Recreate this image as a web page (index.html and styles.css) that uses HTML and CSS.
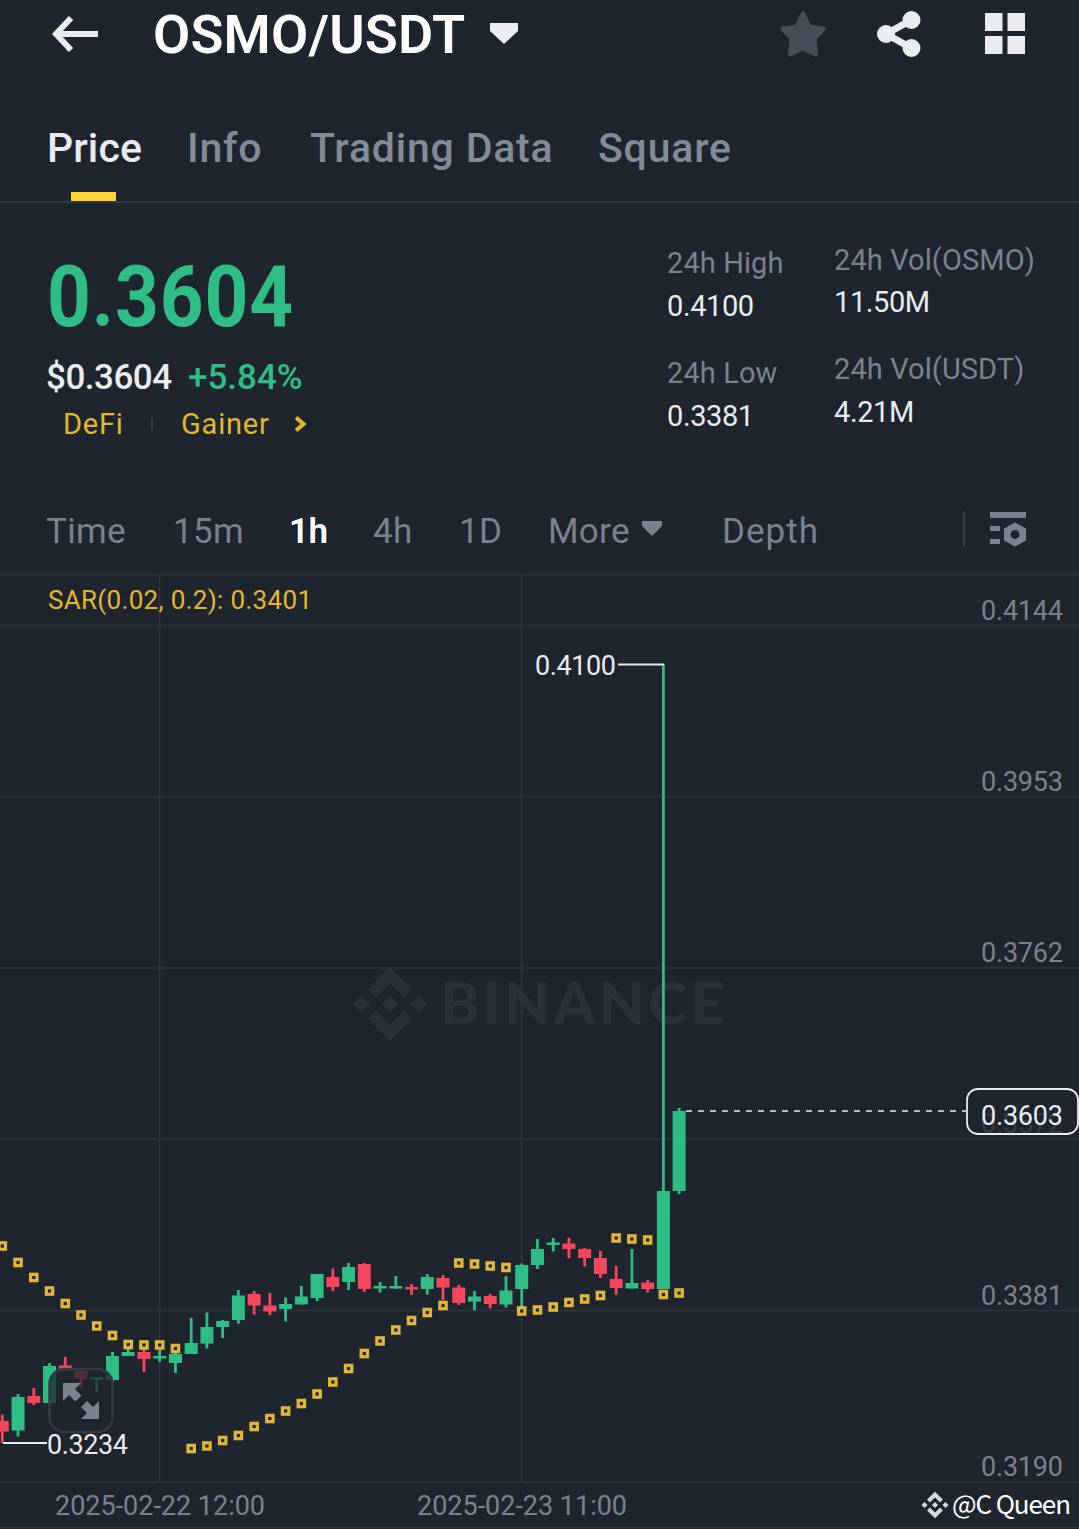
FILE: index.html
```
<!DOCTYPE html>
<html lang="en">
<head>
    <meta charset="UTF-8">
    <meta name="viewport" content="width=device-width, initial-scale=1.0">
    <title>OSMO/USDT</title>
    <link rel="stylesheet" href="styles.css">
</head>
<body>
    <header class="topbar">
        <svg class="back" width="46" height="36" viewBox="0 0 46 36">
            <path d="M19 2 4 18l15 16M4 18h42" fill="none" stroke="#eaecef" stroke-width="6"/>
        </svg>
        <h1 class="pair">OSMO/USDT</h1>
        <svg class="pair-caret" width="28" height="21" viewBox="0 0 28 21">
            <path d="M0 0h28v8L14 21 0 8z" fill="#eaecef"/>
        </svg>
        <div class="actions">
            <svg width="46" height="46" viewBox="0 0 46 46">
                <path d="M23 3l6.200 13.200L43 18 34 27.500 35.500 43 23 36.500 10.500 43l1.500-15.500L3 18l13.800-1.800z" fill="#474d59" stroke="#474d59" stroke-width="5" stroke-linejoin="round"/>
            </svg>
            <svg width="44" height="46" viewBox="0 0 44 46">
                <path d="M34.500 9 9 23l25.500 14" fill="none" stroke="#eaecef" stroke-width="7"/>
                <circle cx="34.500" cy="9" r="9" fill="#eaecef"/>
                <circle cx="9" cy="23" r="9" fill="#eaecef"/>
                <circle cx="34.500" cy="37" r="9" fill="#eaecef"/>
            </svg>
            <svg width="40" height="41" viewBox="0 0 40 41">
                <path d="M0 0h17.500v18H0zM22.500 0H40v18H22.500zM0 23h17.500v18H0zM22.500 23H40v18H22.500z" fill="#eaecef"/>
            </svg>
        </div>
    </header>

    <nav class="tabs">
        <a class="tab active">Price</a>
        <a class="tab">Info</a>
        <a class="tab">Trading Data</a>
        <a class="tab">Square</a>
    </nav>

    <section class="summary">
        <div class="quote">
            <div class="last-price">0.3604</div>
            <div class="change"><span class="usd">$0.3604</span><span class="percent">+5.84%</span></div>
            <div class="tags">
                <span class="tag-defi">DeFi</span>
                <i class="tag-divider"></i>
                <span class="tag-gainer">Gainer</span>
                <svg width="13" height="16" viewBox="0 0 13 16">
                    <path d="M2 1.500 9.500 8 2 14.500" fill="none" stroke="#e5b52b" stroke-width="4"/>
                </svg>
            </div>
        </div>
        <dl class="stats">
            <dt>24h High</dt>
            <dd>0.4100</dd>
            <dt>24h Low</dt>
            <dd>0.3381</dd>
        </dl>
        <dl class="stats volume">
            <dt>24h Vol(OSMO)</dt>
            <dd>11.50M</dd>
            <dt>24h Vol(USDT)</dt>
            <dd>4.21M</dd>
        </dl>
    </section>

    <nav class="intervals">
        <span>Time</span>
        <span>15m</span>
        <span class="active">1h</span>
        <span>4h</span>
        <span>1D</span>
        <span class="more">More
            <svg width="20" height="15" viewBox="0 0 20 15"><path d="M0 0h20v5L10 15 0 5z" fill="#7b828f"/></svg>
        </span>
        <span class="depth">Depth</span>
        <i class="interval-divider"></i>
        <svg class="settings" width="38" height="36" viewBox="0 0 38 36">
            <path d="M0 1h36v6H0zM0 15h10v5H0zM0 28h10v5H0z" fill="#7b828f"/>
            <path d="M25 11.500 36 17.500v12L25 35.500l-11-6v-12z" fill="#7b828f"/>
            <circle cx="25" cy="23.500" r="4.500" fill="#1f252f"/>
        </svg>
    </nav>

    <main class="chart">
        <svg width="1079" height="956" viewBox="0 573 1079 956">
            <defs>
                <g id="logo">
                    <path d="M0-37 22-15 14-7 0-21-14-7-22-15zM0 37 22 15 14 7 0 21-14 7-22 15zM-29-8.500-20.500 0-29 8.500-37.500 0zM29-8.500 37.500 0 29 8.500 20.500 0zM0-8.500 8.500 0 0 8.500-8.500 0z"/>
                </g>
            </defs>
            <g class="watermark">
                <use href="#logo" x="390" y="1004"/>
                <text x="440" y="1024" textLength="288" lengthAdjust="spacingAndGlyphs">BINANCE</text>
            </g>
            <path class="grid" d="M0 625.500H1079M0 796.500H1079M0 968H1079M0 1139H1079M0 1310.500H1079M0 1482H1079M159.500 575V1482M521.500 575V1482"/>
            <path class="frame" d="M0 574.500H1079M0 1527.500H1079"/>

            <g class="axis">
                <text x="981" y="620" textLength="82">0.4144</text>
                <text x="981" y="791" textLength="82">0.3953</text>
                <text x="981" y="962" textLength="82">0.3762</text>
                <text x="981" y="1133" textLength="82">0.3572</text>
                <text x="981" y="1305" textLength="82">0.3381</text>
                <text x="981" y="1476" textLength="82">0.3190</text>
                <text x="55" y="1515" textLength="210">2025-02-22 12:00</text>
                <text x="417" y="1515" textLength="210">2025-02-23 11:00</text>
            </g>
            <text class="indicator" x="48" y="609" textLength="264">SAR(0.02, 0.2): 0.3401</text>

            <g id="candles"></g>
            <g id="sar"></g>

            <!-- high / low markers -->
            <path class="marker" d="M618 664.500H664M3 1443H47"/>
            <g class="marker-text">
                <text x="535" y="675" textLength="81">0.4100</text>
                <text x="47" y="1454" textLength="81">0.3234</text>
            </g>

            <!-- current price -->
            <path class="current-line" d="M686 1111H966"/>
            <rect class="current-box" x="967" y="1089" width="111" height="45" rx="11"/>
            <text class="current-text" x="981" y="1125" textLength="82">0.3603</text>

            <!-- fullscreen button -->
            <rect class="expand-box" x="49.500" y="1369" width="63" height="63" rx="15"/>
            <path class="expand-icon" d="M63 1383h18l-6 6 6.500 6.500-6 6-6.500-6.500-6 6zM99 1419H81l6-6-6-6 6-6 6 6 6-6z"/>

            <use class="author-logo" href="#logo" transform="translate(935 1505) scale(.36)"/>
            <text class="author" x="952" y="1514" textLength="119">@C Queen</text>
        </svg>
    </main>

    <script>
        const STEP = 15.74;
        const FIRST_X = 2.3;

        // [color, high, body top, body bottom, low]
        const candles = [
            ['r', 1414.5, 1421, 1431.5, 1443], ['g', 1394, 1397, 1430.5, 1436.5],
            ['r', 1388, 1396, 1403, 1405], ['g', 1363, 1366, 1403, 1403],
            ['r', 1357, 1365.5, 1371, 1371], ['r', 1371, 1371, 1379, 1388],
            ['g', 1377, 1377, 1380, 1392], ['g', 1352, 1356, 1380, 1382],
            ['g', 1349, 1352, 1356, 1356], ['r', 1350, 1352, 1359, 1372],
            ['g', 1350, 1356, 1358.5, 1362], ['g', 1353, 1354, 1363, 1373],
            ['g', 1318, 1343, 1354, 1354], ['g', 1312.5, 1327, 1343.5, 1348.5],
            ['g', 1320, 1321, 1327, 1338], ['g', 1290, 1295.5, 1320, 1323.5],
            ['r', 1291, 1294, 1305.5, 1314.5], ['r', 1293, 1305.5, 1311.5, 1315],
            ['g', 1297.5, 1304, 1309, 1321.5], ['g', 1286, 1296.5, 1304.5, 1304.5],
            ['g', 1274, 1274, 1298, 1301], ['r', 1268.5, 1277, 1287, 1291],
            ['g', 1263, 1267, 1282, 1290], ['r', 1263, 1264, 1289, 1292],
            ['g', 1282, 1286, 1288.5, 1292.5], ['g', 1276, 1286, 1288.5, 1289],
            ['r', 1284, 1287, 1289.5, 1295], ['g', 1274, 1277, 1289, 1294.5],
            ['r', 1275, 1278, 1287.5, 1300], ['r', 1285, 1287.5, 1303, 1305],
            ['g', 1291, 1296.5, 1301.5, 1310.5], ['r', 1294, 1296, 1304, 1308.5],
            ['g', 1276, 1290.5, 1304.5, 1307.5], ['g', 1263.5, 1265, 1289, 1307],
            ['g', 1239, 1249, 1265, 1269], ['g', 1238, 1242.5, 1245, 1251.5],
            ['r', 1238, 1243.5, 1249, 1258], ['r', 1248, 1249, 1258, 1266.5],
            ['r', 1251, 1258, 1274, 1278], ['r', 1266, 1279, 1288, 1294.5],
            ['g', 1249, 1283, 1288.5, 1288.5], ['r', 1280, 1282.5, 1289, 1292.5],
            ['g', 664, 1191, 1289, 1289], ['g', 1108, 1111, 1191, 1194]
        ];

        const sar = [
            1246, 1262.5, 1277.5, 1291, 1303.5, 1315, 1326, 1335.5, 1344.5, 1345, 1345, 1348.5,
            1448.5, 1446, 1440.5, 1435.5, 1426.5, 1418.5, 1411, 1403.5, 1394, 1382, 1368.5, 1353.5,
            1341, 1330, 1320.5, 1312.5, 1305.5, 1263, 1264, 1266, 1267.5, 1311, 1310, 1307,
            1302.5, 1299, 1295.5, 1238, 1239, 1240, 1294.5, 1293
        ];

        document.getElementById('candles').innerHTML = candles.map(([color, high, top, bottom, low], i) => {
            const x = FIRST_X + i * STEP;
            return `<g class="candle-${color}">
                <rect x="${x - 1.4}" y="${high}" width="2.8" height="${low - high}"/>
                <rect x="${x - 6.5}" y="${top}" width="13" height="${bottom - top}"/>
            </g>`;
        }).join('');

        document.getElementById('sar').innerHTML = sar.map((y, i) => {
            const x = FIRST_X + i * STEP;
            return `<rect x="${x - 3.2}" y="${y - 3.2}" width="6.4" height="6.4"/>`;
        }).join('');
    </script>
</body>
</html>
```
FILE: styles.css
```
* {
    box-sizing: border-box;
}
body {
    margin: 0;
    width: 1079px;
    height: 1529px;
    overflow: hidden;
    background-color: #1f252f;
    font-family: Roboto, "Liberation Sans", sans-serif;
    color: #eaecef;
    white-space: nowrap;
}
svg {
    display: block;
    flex: none;
}
.topbar {
    display: flex;
    align-items: center;
    height: 72px;
    padding: 0 54px 5px 52px;
}
.pair {
    width: 337px;
    margin: 2px 0 0 55px;
    font-size: 54px;
    font-weight: 600;
    letter-spacing: 0.2px;
    color: #fff;
}
.actions {
    display: flex;
    align-items: center;
    margin-left: auto;
}
.actions svg:nth-child(2) {
    margin: 0 64px 0 51px;
}
.tabs {
    display: grid;
    grid-template-columns: 140px 123px 288px 200px;
    height: 131px;
    padding-left: 47px;
    border-bottom: 2px solid #323843;
    font-size: 41px;
    font-weight: 500;
    line-height: 152px;
    letter-spacing: 0.8px;
    color: #848b98;
}
.tab.active {
    display: flex;
    flex-direction: column;
    letter-spacing: 0.1px;
    color: #eaecef;
}
.tab.active::after {
    content: "";
    width: 45px;
    height: 9px;
    margin: -32px 0 0 24px;
    background: #fcd535;
}
.summary {
    display: grid;
    grid-template-columns: 620px 167px 220px;
    height: 288px;
    padding-left: 47px;
}
.quote {
    padding-top: 49px;
}
/* narrow digits */
.last-price {
    height: 90px;
    font-size: 86px;
    font-weight: 700;
    line-height: 90px;
    letter-spacing: 1px;
    transform: scaleX(0.89);
    transform-origin: left;
    color: #2ebd85;
}
.change {
    display: flex;
    height: 70px;
    font-size: 35px;
    font-weight: 500;
    line-height: 72px;
}
.usd {
    width: 141px;
    margin-left: -1px;
    letter-spacing: -0.5px;
}
.percent {
    margin-left: 1px;
    color: #2ebd85;
}
.tags {
    display: flex;
    align-items: center;
    height: 24px;
    padding-left: 16px;
    font-size: 29px;
    letter-spacing: 0.8px;
    color: #e5b52b;
}
.tag-defi {
    width: 88px;
}
.tag-divider {
    width: 2px;
    height: 12px;
    background: #3a414d;
}
.tag-gainer {
    width: 113px;
    margin-left: 28px;
}
.stats {
    margin: 0;
    padding-top: 39px;
    font-size: 29px;
}
.stats.volume {
    padding-top: 36px;
}
.stats dt {
    height: 43px;
    line-height: 43px;
    letter-spacing: 0.1px;
    color: #7b828f;
}
.stats dd {
    height: 67px;
    margin: 0;
    line-height: 43px;
    letter-spacing: -0.4px;
}
.stats.volume dd {
    line-height: 41px;
}
.stats.volume dt:nth-of-type(2) {
    line-height: 41px;
}
.intervals {
    display: grid;
    grid-template-columns: 127px 116px 84px 86px 89px 174px 241px 27px 38px;
    align-items: center;
    height: 82px;
    padding: 0 0 5px 46px;
    font-size: 35px;
    letter-spacing: 0.3px;
    line-height: 46px;
    color: #7b828f;
}
.intervals span {
    padding-top: 4px;
}
.intervals .active {
    font-weight: 600;
    letter-spacing: -0.5px;
    color: #fff;
}
.intervals .depth {
    letter-spacing: 1px;
}
.more {
    display: flex;
    align-items: center;
    gap: 12px;
}
.more svg {
    margin-top: -6px;
}
.interval-divider {
    width: 2px;
    height: 36px;
    margin-top: -2px;
    background: #343b46;
}
.settings {
    margin-top: -2px;
}
.chart text {
    font-size: 27px;
}
.watermark {
    fill: #2b313c;
}
.chart .watermark text {
    font-family: Lato, sans-serif;
    font-size: 57px;
    font-weight: 900;
    letter-spacing: 3px;
}
.grid,
.frame {
    fill: none;
    stroke: #2e3540;
    stroke-width: 1.7;
}
.axis {
    fill: #7b828f;
}
.chart .indicator {
    font-size: 26px;
    fill: #e5b52b;
}
.candle-g {
    fill: #2ebd85;
}
.candle-r {
    fill: #f6465d;
}
#sar {
    fill: #1f252f;
    stroke: #e2b636;
    stroke-width: 3.2;
}
.marker {
    stroke: #eaecef;
    stroke-width: 2;
}
.marker-text,
.current-text {
    fill: #eaecef;
}
.current-line {
    stroke: #eaecef;
    stroke-width: 1.6;
    stroke-dasharray: 6 6;
}
.current-box {
    fill: #1f252f;
    fill-opacity: 0.75;
    stroke: #eaecef;
    stroke-width: 1.8;
}
.expand-box {
    fill: #1f252f;
    fill-opacity: 0.75;
    stroke: #343b46;
    stroke-width: 2.5;
}
.expand-icon {
    fill: #7b828f;
}
.author-logo {
    fill: #d5d8dd;
}
.chart .author {
    font-family: "Noto Sans CJK SC", "Noto Sans", sans-serif;
    font-size: 26px;
    fill: #fff;
}
```
